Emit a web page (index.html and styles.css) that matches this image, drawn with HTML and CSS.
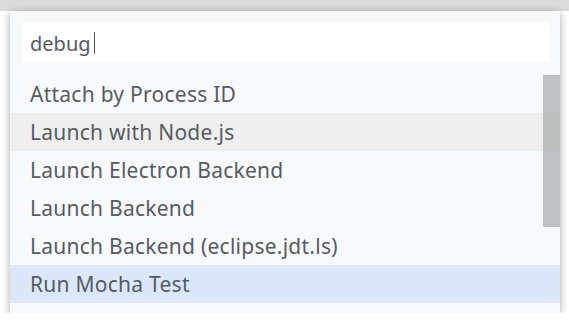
FILE: index.html
```html
<!DOCTYPE html>
<html>
  <head>
    <meta charset="UTF-8" />
    <title>Quick pick</title>
    <link rel="stylesheet" href="styles.css">
  </head>
  <body>
    <div class="topbar"></div>
    <div class="picker">
      <div class="input">
        <span class="query">debug</span><span class="caret"></span>
      </div>
      <div class="list">
        <ul class="items">
          <li>Attach by Process ID</li>
          <li class="hover">Launch with Node.js</li>
          <li>Launch Electron Backend</li>
          <li>Launch Backend</li>
          <li>Launch Backend (eclipse.jdt.ls)</li>
          <li class="selected">Run Mocha Test</li>
        </ul>
        <div class="scrollbar"></div>
      </div>
    </div>
  </body>
</html>
```

FILE: styles.css
```css
body {
  margin: 0;
  background: #fff;
  font-family: "Noto Sans", "Open Sans", sans-serif;
  color: #575b61;
}

.topbar {
  height: 11px;
  background: #dcdcdc;
}

.picker {
  width: 550px;
  margin-left: 10px;
  padding-top: 11px;
  padding-bottom: 10px;
  background: #f8f9fb;
  box-shadow: 0 2px 8px rgba(0, 0, 0, 0.35);
}

.input {
  display: flex;
  align-items: center;
  height: 38px;
  margin: 0 11px 0 12px;
  padding: 2px 0 0 8px;
  background: #fff;
  font-size: 20px;
}

.caret {
  display: inline-block;
  width: 1px;
  height: 22px;
  margin-left: 3px;
  background: #555;
}

.list {
  position: relative;
  margin-top: 13px;
}

.items {
  list-style: none;
  margin: 0;
  padding: 0;
}

.items li {
  height: 38px;
  line-height: 38px;
  padding-left: 20px;
  font-size: 21px;
  letter-spacing: 0.25px;
}

.items li.hover {
  background: #efefef;
}

.items li.selected {
  background: #dae8fa;
}

.scrollbar {
  position: absolute;
  top: 0;
  right: 0;
  width: 17px;
  height: 152px;
  background: rgba(160, 163, 163, 0.65);
}
```
